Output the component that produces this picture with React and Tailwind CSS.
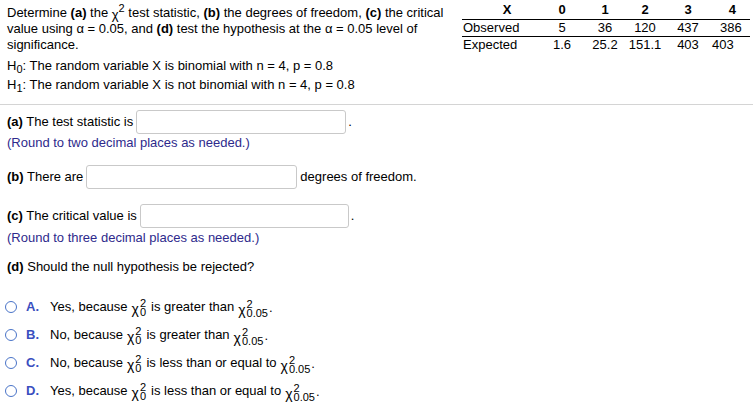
import React from "react";

const font = { fontFamily: '"Liberation Sans", Arial, sans-serif' };

function Chi0() {
  return (
    <span className="inline-flex items-center ml-[4px] mr-[5px]">
      <span className="text-[14px] leading-none relative top-[2px]">χ</span>
      <span className="inline-flex flex-col text-[11px] leading-[9px] ml-[1px] relative top-[1px]">
        <span>2</span>
        <span>0</span>
      </span>
    </span>
  );
}

function ChiCrit() {
  return (
    <span className="inline-flex items-center ml-[4px]">
      <span className="text-[14px] leading-none relative top-[3px]">χ</span>
      <span className="inline-flex flex-col text-[11px] leading-[9px] ml-[1px] relative top-[2px]">
        <span>2</span>
        <span>0.05</span>
      </span>
    </span>
  );
}

function Box({ w }) {
  return (
    <div
      className={`h-[24px] border border-[#c9c9c9] rounded-[3px] bg-white ${w}`}
    />
  );
}

const options = [
  { key: "A.", pre: "Yes, because", mid: "is greater than" },
  { key: "B.", pre: "No, because", mid: "is greater than" },
  { key: "C.", pre: "No, because", mid: "is less than or equal to" },
  { key: "D.", pre: "Yes, because", mid: "is less than or equal to" },
];

export default function App() {
  return (
    <div className="w-[753px] h-[420px] bg-white text-black text-[13px] overflow-hidden" style={font}>
      {/* top: question + table */}
      <div className="flex">
        <div className="w-[448px] pl-[7px] pt-[5px]">
          <p className="leading-[16px]">
            Determine <b>(a)</b> the{" "}
            <span className="relative top-[2px]">χ</span>
            <span className="text-[11px] relative -top-[5px]">2</span> test statistic,{" "}
            <b>(b)</b> the degrees of freedom, <b>(c)</b> the critical value using α = 0.05,
            and <b>(d)</b> test the hypothesis at the α = 0.05 level of significance.
          </p>
          <p className="leading-[16px] mt-[5px]">
            H<span className="text-[11px] relative top-[3px]">0</span>: The random variable X is binomial with n = 4, p = 0.8
          </p>
          <p className="leading-[16px] mt-[3px]">
            H<span className="text-[11px] relative top-[3px]">1</span>: The random variable X is not binomial with n = 4, p = 0.8
          </p>
        </div>

        <table className="ml-[14px] mt-[2px] h-fit border-collapse leading-[16px]">
          <tbody>
            <tr className="border-b border-black h-[17px] font-bold">
              <td className="w-[78px] text-center pl-[12px]">X</td>
              <td className="w-[44px] text-center">0</td>
              <td className="w-[42px] text-center">1</td>
              <td className="w-[38px] text-center">2</td>
              <td className="w-[48px] text-center">3</td>
              <td className="w-[32px] text-center pl-[3px]">4</td>
            </tr>
            <tr className="border-b border-black h-[17px]">
              <td className="pl-[1px]">Observed</td>
              <td className="text-center">5</td>
              <td className="text-center">36</td>
              <td className="text-center">120</td>
              <td className="text-center">437</td>
              <td className="text-center">386</td>
            </tr>
            <tr className="h-[17px]">
              <td className="pl-[1px]">Expected</td>
              <td className="text-center">1.6</td>
              <td className="text-center">25.2</td>
              <td className="text-center">151.1</td>
              <td className="text-center">403</td>
              <td className="text-center pr-[16px]">403</td>
            </tr>
          </tbody>
        </table>
      </div>

      {/* divider */}
      <div className="mt-[11px] h-px bg-[#d4d4d4]" />

      <div className="pl-[7px]">
        <div className="flex items-center mt-[5px] h-[24px]">
          <span>
            <b>(a)</b> The test statistic is
          </span>
          <Box w="w-[210px] ml-[3px]" />
          <span className="ml-[2px]">.</span>
        </div>
        <p className="leading-[16px] mt-[1px] text-[#2e2a8c]">(Round to two decimal places as needed.)</p>

        <div className="flex items-center mt-[14px] h-[24px]">
          <span>
            <b>(b)</b> There are
          </span>
          <Box w="w-[211px] ml-[3px]" />
          <span className="ml-[3px]">degrees of freedom.</span>
        </div>

        <div className="flex items-center mt-[15px] h-[24px]">
          <span>
            <b>(c)</b> The critical value is
          </span>
          <Box w="w-[209px] ml-[3px]" />
          <span className="ml-[2px]">.</span>
        </div>
        <p className="leading-[16px] mt-[2px] text-[#2e2a8c]">(Round to three decimal places as needed.)</p>

        <p className="leading-[16px] mt-[13px]">
          <b>(d)</b> Should the null hypothesis be rejected?
        </p>
      </div>

      <div className="mt-[18px] pl-[5px]">
        {options.map((o) => (
          <div key={o.key} className="flex items-center h-[28px]">
            <span className="w-[12px] h-[12px] rounded-full border-[1.5px] border-[#4a74c8] bg-white" />
            <span className="ml-[9px] w-[24px] font-bold text-[#3a4fc0]">{o.key}</span>
            <span>{o.pre}</span>
            <Chi0 />
            <span>{o.mid}</span>
            <ChiCrit />
            <span className="relative top-[1px] ml-[1px]">.</span>
          </div>
        ))}
      </div>
    </div>
  );
}
